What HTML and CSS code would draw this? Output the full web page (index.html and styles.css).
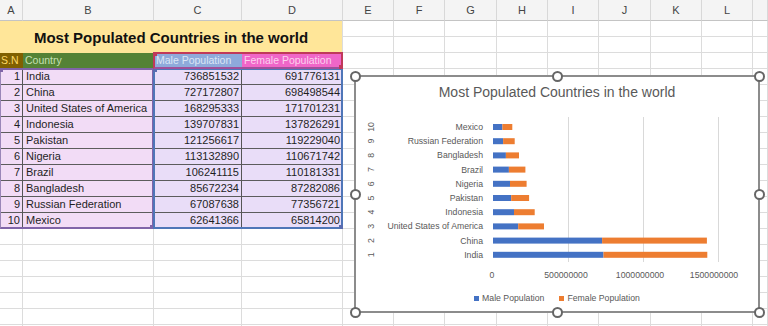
FILE: index.html
```html
<!DOCTYPE html>
<html>
<head>
<meta charset="utf-8">
<link rel="stylesheet" href="styles.css">
</head>
<body>
<div class="sheet">
  <div class="ch">A</div><div class="ch">B</div><div class="ch">C</div><div class="ch">D</div><div class="ch">E</div><div class="ch">F</div><div class="ch">G</div><div class="ch">H</div><div class="ch">I</div><div class="ch">J</div><div class="ch">K</div><div class="ch">L</div><div class="ch"></div>

  <div class="title">Most Populated Countries in the world</div>
  <div class="c"></div><div class="c"></div><div class="c"></div><div class="c"></div><div class="c"></div><div class="c"></div><div class="c"></div><div class="c"></div><div class="c"></div>
  <div class="c"></div><div class="c"></div><div class="c"></div><div class="c"></div><div class="c"></div><div class="c"></div><div class="c"></div><div class="c"></div><div class="c"></div>

  <div class="c hd hd-sn">S.N</div><div class="c hd hd-country">Country</div><div class="c hd hd-male">Male Population</div><div class="c hd hd-female">Female Population</div>
  <div class="c"></div><div class="c"></div><div class="c"></div><div class="c"></div><div class="c"></div><div class="c"></div><div class="c"></div><div class="c"></div><div class="c"></div>

  <div class="c d ab num">1</div><div class="c d ab txt">India</div><div class="c d cd num">736851532</div><div class="c d cd num">691776131</div>
  <div class="c"></div><div class="c"></div><div class="c"></div><div class="c"></div><div class="c"></div><div class="c"></div><div class="c"></div><div class="c"></div><div class="c"></div>
  <div class="c d ab num">2</div><div class="c d ab txt">China</div><div class="c d cd num">727172807</div><div class="c d cd num">698498544</div>
  <div class="c"></div><div class="c"></div><div class="c"></div><div class="c"></div><div class="c"></div><div class="c"></div><div class="c"></div><div class="c"></div><div class="c"></div>
  <div class="c d ab num">3</div><div class="c d ab txt">United States of America</div><div class="c d cd num">168295333</div><div class="c d cd num">171701231</div>
  <div class="c"></div><div class="c"></div><div class="c"></div><div class="c"></div><div class="c"></div><div class="c"></div><div class="c"></div><div class="c"></div><div class="c"></div>
  <div class="c d ab num">4</div><div class="c d ab txt">Indonesia</div><div class="c d cd num">139707831</div><div class="c d cd num">137826291</div>
  <div class="c"></div><div class="c"></div><div class="c"></div><div class="c"></div><div class="c"></div><div class="c"></div><div class="c"></div><div class="c"></div><div class="c"></div>
  <div class="c d ab num">5</div><div class="c d ab txt">Pakistan</div><div class="c d cd num">121256617</div><div class="c d cd num">119229040</div>
  <div class="c"></div><div class="c"></div><div class="c"></div><div class="c"></div><div class="c"></div><div class="c"></div><div class="c"></div><div class="c"></div><div class="c"></div>
  <div class="c d ab num">6</div><div class="c d ab txt">Nigeria</div><div class="c d cd num">113132890</div><div class="c d cd num">110671742</div>
  <div class="c"></div><div class="c"></div><div class="c"></div><div class="c"></div><div class="c"></div><div class="c"></div><div class="c"></div><div class="c"></div><div class="c"></div>
  <div class="c d ab num">7</div><div class="c d ab txt">Brazil</div><div class="c d cd num">106241115</div><div class="c d cd num">110181331</div>
  <div class="c"></div><div class="c"></div><div class="c"></div><div class="c"></div><div class="c"></div><div class="c"></div><div class="c"></div><div class="c"></div><div class="c"></div>
  <div class="c d ab num">8</div><div class="c d ab txt">Bangladesh</div><div class="c d cd num">85672234</div><div class="c d cd num">87282086</div>
  <div class="c"></div><div class="c"></div><div class="c"></div><div class="c"></div><div class="c"></div><div class="c"></div><div class="c"></div><div class="c"></div><div class="c"></div>
  <div class="c d ab num">9</div><div class="c d ab txt">Russian Federation</div><div class="c d cd num">67087638</div><div class="c d cd num">77356721</div>
  <div class="c"></div><div class="c"></div><div class="c"></div><div class="c"></div><div class="c"></div><div class="c"></div><div class="c"></div><div class="c"></div><div class="c"></div>
  <div class="c d ab num">10</div><div class="c d ab txt">Mexico</div><div class="c d cd num">62641366</div><div class="c d cd num">65814200</div>
  <div class="c"></div><div class="c"></div><div class="c"></div><div class="c"></div><div class="c"></div><div class="c"></div><div class="c"></div><div class="c"></div><div class="c"></div>

  <div class="c"></div><div class="c"></div><div class="c"></div><div class="c"></div><div class="c"></div><div class="c"></div><div class="c"></div><div class="c"></div><div class="c"></div><div class="c"></div><div class="c"></div><div class="c"></div><div class="c"></div>
  <div class="c"></div><div class="c"></div><div class="c"></div><div class="c"></div><div class="c"></div><div class="c"></div><div class="c"></div><div class="c"></div><div class="c"></div><div class="c"></div><div class="c"></div><div class="c"></div><div class="c"></div>
  <div class="c"></div><div class="c"></div><div class="c"></div><div class="c"></div><div class="c"></div><div class="c"></div><div class="c"></div><div class="c"></div><div class="c"></div><div class="c"></div><div class="c"></div><div class="c"></div><div class="c"></div>
  <div class="c"></div><div class="c"></div><div class="c"></div><div class="c"></div><div class="c"></div><div class="c"></div><div class="c"></div><div class="c"></div><div class="c"></div><div class="c"></div><div class="c"></div><div class="c"></div><div class="c"></div>
  <div class="c"></div><div class="c"></div><div class="c"></div><div class="c"></div><div class="c"></div><div class="c"></div><div class="c"></div><div class="c"></div><div class="c"></div><div class="c"></div><div class="c"></div><div class="c"></div><div class="c"></div>
  <div class="c"></div><div class="c"></div><div class="c"></div><div class="c"></div><div class="c"></div><div class="c"></div><div class="c"></div><div class="c"></div><div class="c"></div><div class="c"></div><div class="c"></div><div class="c"></div><div class="c"></div>
  <div class="c"></div><div class="c"></div><div class="c"></div><div class="c"></div><div class="c"></div><div class="c"></div><div class="c"></div><div class="c"></div><div class="c"></div><div class="c"></div><div class="c"></div><div class="c"></div><div class="c"></div>

  <div class="hl hl-cat"></div>
  <div class="hl hl-val"></div>
  <div class="hl hl-ser"></div>

  <div class="chart">
    <span class="hd-h h-tl"></span><span class="hd-h h-tc"></span><span class="hd-h h-tr"></span>
    <span class="hd-h h-ml"></span><span class="hd-h h-mr"></span>
    <span class="hd-h h-bl"></span><span class="hd-h h-bc"></span><span class="hd-h h-br"></span>
    <div class="ctitle">Most Populated Countries in the world</div>
    <svg class="plot" width="402" height="187" viewBox="0 0 402 187">
      <g stroke="#d9d9d9" stroke-width="1">
        <line x1="212.5" y1="16" x2="212.5" y2="161"/>
        <line x1="287.5" y1="16" x2="287.5" y2="161"/>
        <line x1="362.5" y1="16" x2="362.5" y2="161"/>
      </g>
      <g fill="#4472c4">
        <rect x="137" y="23" width="9.4" height="6"/>
        <rect x="137" y="37.2" width="10.1" height="6"/>
        <rect x="137" y="51.4" width="12.9" height="6"/>
        <rect x="137" y="65.6" width="15.9" height="6"/>
        <rect x="137" y="79.8" width="17" height="6"/>
        <rect x="137" y="94" width="18.2" height="6"/>
        <rect x="137" y="108.2" width="21" height="6"/>
        <rect x="137" y="122.4" width="25.2" height="6"/>
        <rect x="137" y="136.6" width="109.1" height="6"/>
        <rect x="137" y="150.8" width="110.5" height="6"/>
      </g>
      <g fill="#ed7d31">
        <rect x="146.4" y="23" width="9.9" height="6"/>
        <rect x="147.1" y="37.2" width="11.6" height="6"/>
        <rect x="149.9" y="51.4" width="13.1" height="6"/>
        <rect x="152.9" y="65.6" width="16.5" height="6"/>
        <rect x="154" y="79.8" width="16.6" height="6"/>
        <rect x="155.2" y="94" width="17.9" height="6"/>
        <rect x="158" y="108.2" width="20.7" height="6"/>
        <rect x="162.2" y="122.4" width="25.8" height="6"/>
        <rect x="246.1" y="136.6" width="104.8" height="6"/>
        <rect x="247.5" y="150.8" width="103.8" height="6"/>
      </g>
      <g class="cat" text-anchor="end">
        <text x="127" y="26" dy=".35em">Mexico</text>
        <text x="127" y="40.2" dy=".35em">Russian Federation</text>
        <text x="127" y="54.4" dy=".35em">Bangladesh</text>
        <text x="127" y="68.6" dy=".35em">Brazil</text>
        <text x="127" y="82.8" dy=".35em">Nigeria</text>
        <text x="127" y="97" dy=".35em">Pakistan</text>
        <text x="127" y="111.2" dy=".35em">Indonesia</text>
        <text x="127" y="125.4" dy=".35em">United States of America</text>
        <text x="127" y="139.6" dy=".35em">China</text>
        <text x="127" y="153.8" dy=".35em">India</text>
      </g>
      <g class="cat" text-anchor="middle">
        <text transform="translate(15 26) rotate(-90)" dy=".35em">10</text>
        <text transform="translate(15 40.2) rotate(-90)" dy=".35em">9</text>
        <text transform="translate(15 54.4) rotate(-90)" dy=".35em">8</text>
        <text transform="translate(15 68.6) rotate(-90)" dy=".35em">7</text>
        <text transform="translate(15 82.8) rotate(-90)" dy=".35em">6</text>
        <text transform="translate(15 97) rotate(-90)" dy=".35em">5</text>
        <text transform="translate(15 111.2) rotate(-90)" dy=".35em">4</text>
        <text transform="translate(15 125.4) rotate(-90)" dy=".35em">3</text>
        <text transform="translate(15 139.6) rotate(-90)" dy=".35em">2</text>
        <text transform="translate(15 153.8) rotate(-90)" dy=".35em">1</text>
      </g>
      <g class="cat" text-anchor="middle">
        <text x="136" y="174" dy=".35em">0</text>
        <text x="210" y="174" dy=".35em">500000000</text>
        <text x="284" y="174" dy=".35em">1000000000</text>
        <text x="358" y="174" dy=".35em">1500000000</text>
      </g>
    </svg>
    <div class="legend">
      <span class="li"><span class="sw sw-male"></span>Male Population</span>
      <span class="li"><span class="sw sw-female"></span>Female Population</span>
    </div>
  </div>
</div>
</body>
</html>
```

FILE: styles.css
```css
html, body {
  margin: 0;
  padding: 0;
  background: #ffffff;
}
body {
  width: 768px;
  height: 326px;
  overflow: hidden;
  font-family: "Liberation Sans", Arial, sans-serif;
}
.sheet {
  position: relative;
  display: grid;
  grid-template-columns: 23px 131px 88px 101px 51px 51px 52px 51px 51px 52px 51px 51px 15px;
  grid-template-rows: 21px;
  grid-auto-rows: 16px;
}
.ch {
  box-sizing: border-box;
  background: #f4f4f4;
  border-right: 1px solid #d8d8d8;
  border-bottom: 1px solid #c4c4c4;
  text-align: center;
  font-size: 11px;
  line-height: 20px;
  color: #444444;
}
.c {
  box-sizing: border-box;
  border-right: 1px solid #dcdcdc;
  border-bottom: 1px solid #dcdcdc;
  font-size: 11px;
  line-height: 15px;
  white-space: nowrap;
  overflow: hidden;
  color: #1f1f1f;
}
.title {
  grid-column: 1 / span 4;
  grid-row: span 2;
  box-sizing: border-box;
  background: #ffe699;
  border-right: 1px solid #dcdcdc;
  display: flex;
  align-items: center;
  justify-content: center;
  font-weight: bold;
  font-size: 15px;
  color: #111111;
}
.hd {
  font-size: 10.5px;
  padding-left: 2px;
  border-bottom-color: #6a6a6a;
}
.hd-sn {
  background: #806000;
  color: #ffd966;
  padding-left: 1px;
  border-right-color: #806000;
}
.hd-country {
  background: #548235;
  color: #c6e0b4;
  border-right-color: #548235;
}
.hd-male {
  background: #8eaadb;
  color: #dde6f5;
  border-right-color: #8eaadb;
}
.hd-female {
  background: #f066c8;
  color: #fcd3ef;
  border-right-color: #6a6a6a;
}
.d {
  border-right: 1px solid #555555;
  border-bottom: 1px solid #5c5c5c;
}
.ab {
  background: #f2dcf6;
}
.cd {
  background: #e9ddf8;
}
.num {
  text-align: right;
  padding-right: 2px;
}
.txt {
  padding-left: 3px;
}
.hl {
  position: absolute;
  inset: -1px 0 0 -1px;
  box-sizing: border-box;
  pointer-events: none;
}
.hl::before,
.hl::after {
  content: "";
  position: absolute;
  width: 4px;
  height: 4px;
}
.hl::before {
  left: -2px;
  top: -2px;
}
.hl::after {
  right: -2px;
  bottom: -2px;
}
.hl-cat {
  grid-column: 1 / 3;
  grid-row: 5 / 15;
  inset: -1px 0 0 0;
  border: 2px solid #8064a8;
  border-left: 1px solid #9a86b8;
}
.hl-cat::before,
.hl-cat::after {
  background: #8064a8;
}
.hl-val {
  grid-column: 3 / 5;
  grid-row: 5 / 15;
  border: 2px solid #4f76b8;
}
.hl-val::before,
.hl-val::after {
  background: #5a6cb0;
}
.hl-ser {
  grid-column: 3 / 5;
  grid-row: 4 / 5;
  border: 2px solid #c0395a;
  border-bottom-color: #a0509a;
}
.hl-ser::before,
.hl-ser::after {
  background: #c0395a;
}
.chart {
  position: absolute;
  left: 354px;
  top: 75px;
  width: 406px;
  height: 238px;
  box-sizing: border-box;
  border: 2px solid #8c8c8c;
  background: #ffffff;
  display: flex;
  flex-direction: column;
}
.hd-h {
  position: absolute;
  width: 11px;
  height: 11px;
  box-sizing: border-box;
  border: 2px solid #666666;
  border-radius: 50%;
  background: #ffffff;
  z-index: 2;
}
.h-tl { left: -6.5px; top: -6.5px; }
.h-tc { left: calc(50% - 5.5px); top: -6.5px; }
.h-tr { right: -6.5px; top: -6.5px; }
.h-ml { left: -6.5px; top: calc(50% - 5.5px); }
.h-mr { right: -6.5px; top: calc(50% - 5.5px); }
.h-bl { left: -6.5px; bottom: -6.5px; }
.h-bc { left: calc(50% - 5.5px); bottom: -6.5px; }
.h-br { right: -6.5px; bottom: -6.5px; }
.ctitle {
  padding-top: 6px;
  line-height: 18px;
  text-align: center;
  font-size: 14px;
  color: #595959;
}
.plot {
  display: block;
}
.cat {
  font-family: "Liberation Sans", Arial, sans-serif;
  font-size: 8.7px;
  fill: #595959;
}
.legend {
  margin-top: 4px;
  display: flex;
  justify-content: center;
  gap: 15px;
  font-size: 8.7px;
  line-height: 12px;
  color: #595959;
}
.li {
  display: flex;
  align-items: center;
}
.sw {
  width: 5px;
  height: 5px;
  margin-right: 3px;
}
.sw-male {
  background: #4472c4;
}
.sw-female {
  background: #ed7d31;
}
```
